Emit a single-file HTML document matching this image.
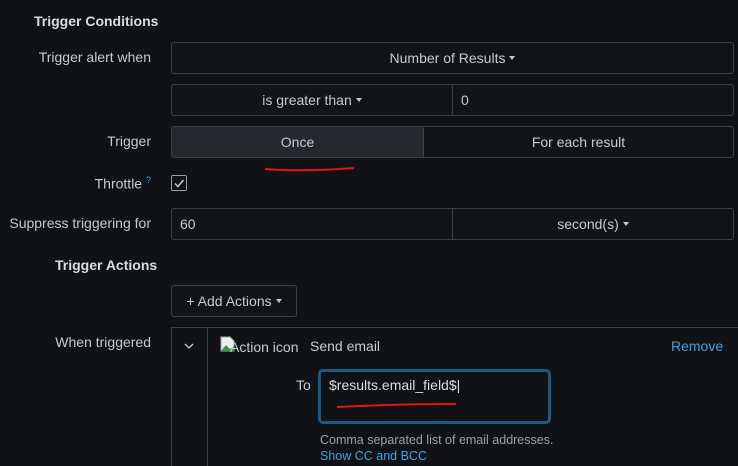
<!DOCTYPE html><html><head><style>
html,body{margin:0;width:738px;height:466px;overflow:hidden}
body{background:#111215;font-family:"Liberation Sans",sans-serif;color:#c3cbd4;font-size:14px;position:relative}
.a{position:absolute;white-space:nowrap}
.lbl{position:absolute;right:587px;text-align:right;white-space:nowrap;color:#c3cbd4}
.b{position:absolute;box-sizing:border-box;border:1px solid #3c3f44;background:#131417;border-radius:3px;display:flex;align-items:center;justify-content:center;color:#c3cbd4}
.h{position:absolute;font-weight:bold;color:#d8dde3;font-size:14px}
.car{display:inline-block;width:0;height:0;border-left:3.5px solid transparent;border-right:3.5px solid transparent;border-top:4px solid #c3cbd4;margin-left:4px;vertical-align:middle}
</style></head><body>
<div class="h" style="left:34px;top:13px">Trigger Conditions</div>
<div class="lbl" style="top:49px">Trigger alert when</div>
<div class="b" style="left:171px;top:42px;width:563px;height:32px">Number of Results<span class="car"></span></div>
<div class="b" style="left:171px;top:84px;width:282px;height:32px;border-radius:3px 0 0 3px">is greater than<span class="car"></span></div>
<div class="b" style="left:452px;top:84px;width:282px;height:32px;justify-content:flex-start;padding-left:8px;border-radius:0 3px 3px 0">0</div>
<div class="lbl" style="top:133px">Trigger</div>
<div class="b" style="left:171px;top:126px;width:253px;height:32px;background:#25282c;border-radius:3px 0 0 3px">Once</div>
<div class="b" style="left:423px;top:126px;width:311px;height:32px;border-radius:0 3px 3px 0">For each result</div>
<svg class="a" style="left:262px;top:164px" width="95" height="10"><path d="M3 5 Q40 8 92 4" stroke="#e0141a" stroke-width="2" fill="none"/></svg>
<div class="lbl" style="top:175px">Throttle <sup style="color:#3aa0e0;font-size:9px">?</sup></div>
<div class="a" style="left:171px;top:175px;width:16px;height:16px;box-sizing:border-box;border:1px solid #9aa0a6;border-radius:2px"><svg width="14" height="14"><path d="M3 7.5 L6 10.5 L11.5 4" stroke="#d0d4d8" stroke-width="1.4" fill="none"/></svg></div>
<div class="lbl" style="top:215px">Suppress triggering for</div>
<div class="b" style="left:171px;top:208px;width:282px;height:32px;justify-content:flex-start;padding-left:8px;border-radius:3px 0 0 3px">60</div>
<div class="b" style="left:452px;top:208px;width:282px;height:32px;border-radius:0 3px 3px 0">second(s)<span class="car"></span></div>
<div class="h" style="left:55px;top:257px">Trigger Actions</div>
<div class="b" style="left:171px;top:285px;width:126px;height:32px;background:#131417">+ Add Actions<span class="car"></span></div>
<div class="lbl" style="top:334px">When triggered</div>
<div class="a" style="left:171px;top:327px;width:580px;height:150px;box-sizing:border-box;border:1px solid #3c3f44;background:#111215"></div>
<div class="a" style="left:207px;top:327px;width:1px;height:140px;background:#3c3f44"></div>
<svg class="a" style="left:183px;top:342px" width="12" height="8"><path d="M2 2 L6 6 L10 2" stroke="#c3cbd4" stroke-width="1.3" fill="none"/></svg>
<svg class="a" style="left:220px;top:336px" width="16" height="16"><path d="M1 1h9l4 4v10H1z" fill="#e8eef2" stroke="#9aa" stroke-width="1"/><path d="M1 15 L6 9 L10 13 L14 10 V15Z" fill="#3a9a3a"/></svg>
<div class="a" style="left:230px;top:339px">Action icon</div>
<div class="a" style="left:310px;top:338px">Send email</div>
<div class="a" style="left:671px;top:338px;color:#3ea3e6">Remove</div>
<div class="a" style="left:296px;top:377px">To</div>
<div class="a" style="left:318px;top:369px;width:233px;height:55px;box-sizing:border-box;border:3px solid #1b5886;border-radius:5px;background:#111215"></div>
<div class="a" style="left:329px;top:377px;color:#d8dde3">$results.email_field$|</div>
<svg class="a" style="left:334px;top:401px" width="126" height="10"><path d="M3 6 Q60 3 122 3" stroke="#e0141a" stroke-width="2" fill="none"/></svg>
<div class="a" style="left:320px;top:433px;font-size:12.5px;color:#9aa0a6">Comma separated list of email addresses.</div>
<div class="a" style="left:320px;top:449px;font-size:12.5px;color:#3ea3e6">Show CC and BCC</div>
</body></html>
